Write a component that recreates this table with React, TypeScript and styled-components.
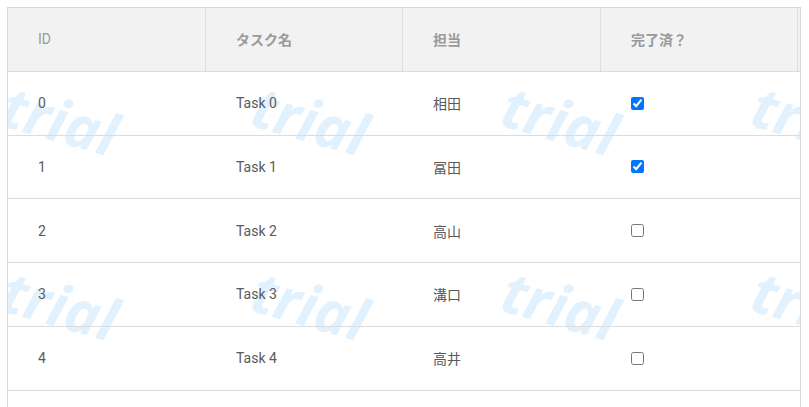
import React from "react";
import styled, { createGlobalStyle } from "styled-components";

const GlobalStyle = createGlobalStyle`
  body {
    margin: 7px 8px 0 7px;
    background: #ffffff;
    font-family: Roboto, "Noto Sans CJK JP", sans-serif;
  }
`;

const GridWrapper = styled.div`
  position: relative;
  overflow: hidden;
  height: 420px;
  border: 1px solid #d9d9d9;
  box-shadow: 0 0 6px rgba(0, 0, 0, 0.18);
  background-color: #ffffff;
`;

const Watermark = styled.div`
  position: absolute;
  inset: 0;
  z-index: 0;
  pointer-events: none;
  display: grid;
  grid-template-columns: repeat(4, 250px);
  grid-auto-rows: 185px;
  padding-top: 68px;
  padding-left: 4px;
`;

const WatermarkText = styled.span`
  display: block;
  width: 120px;
  height: 80px;
  color: #e1f1fd;
  font-family: "Open Sans", sans-serif;
  font-size: 58px;
  line-height: 1;
  font-weight: 700;
  font-style: italic;
  letter-spacing: 0;
  transform: rotate(16deg);
  transform-origin: left top;
`;

const Row = styled.div<{ $header?: boolean }>`
  position: relative;
  z-index: 1;
  display: grid;
  grid-template-columns: 198px 197px 198px 197px;
  height: 63.75px;
  border-bottom: 1px solid #dcdcdc;
  box-sizing: border-box;
  background-color: ${(p) => (p.$header ? "#f2f2f2" : "transparent")};
`;

const HeaderCell = styled.div<{ $light?: boolean }>`
  display: flex;
  align-items: center;
  padding-left: 30px;
  border-right: 1px solid #dedede;
  color: #9a9a9a;
  font-size: 14px;
  font-weight: ${(p) => (p.$light ? 400 : 700)};
`;

const Cell = styled.div`
  display: flex;
  align-items: center;
  padding-left: 30px;
  color: #5a5a5a;
  font-size: 14px;
`;

const Check = styled.input`
  width: 13px;
  height: 13px;
  margin: 0;
  accent-color: #0075ff;
`;

const tasks = [
  { id: 0, name: "Task 0", owner: "相田", done: true },
  { id: 1, name: "Task 1", owner: "冨田", done: true },
  { id: 2, name: "Task 2", owner: "高山", done: false },
  { id: 3, name: "Task 3", owner: "溝口", done: false },
  { id: 4, name: "Task 4", owner: "高井", done: false },
  { id: 5, name: "Task 5", owner: "", done: false },
];

export default function App() {
  return (
    <>
      <GlobalStyle />
      <GridWrapper>
        <Watermark>
          {Array.from({ length: 8 }).map((_, i) => (
            <WatermarkText key={i}>trial</WatermarkText>
          ))}
        </Watermark>
        <Row $header>
          <HeaderCell $light>ID</HeaderCell>
          <HeaderCell>タスク名</HeaderCell>
          <HeaderCell>担当</HeaderCell>
          <HeaderCell>完了済？</HeaderCell>
        </Row>
        {tasks.map((t) => (
          <Row key={t.id}>
            <Cell>{t.id}</Cell>
            <Cell>{t.name}</Cell>
            <Cell>{t.owner}</Cell>
            <Cell>
              <Check type="checkbox" checked={t.done} readOnly />
            </Cell>
          </Row>
        ))}
      </GridWrapper>
    </>
  );
}
